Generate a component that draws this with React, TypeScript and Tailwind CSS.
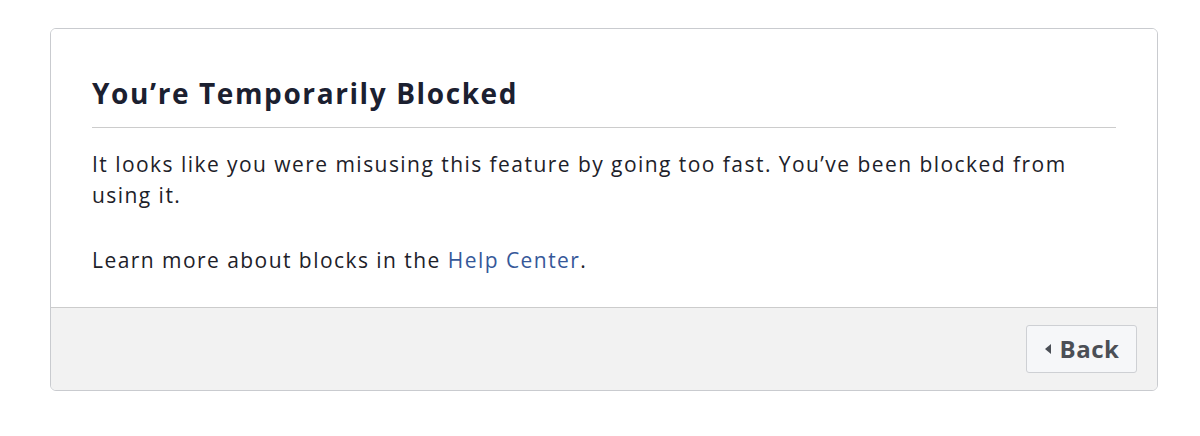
const BackArrow = () => (
  <svg width="8" height="12" viewBox="0 0 8 12" className="mr-[8px]">
    <path d="M7 1 L1 6 L7 11 Z" fill="#4b4f56" />
  </svg>
);

const App = () => {
  return (
    <div className="w-[1200px] h-[436px] bg-white pt-[28px] pl-[50px] font-['Open_Sans','Liberation_Sans',sans-serif]">
      <div className="w-[1108px] h-[363px] border border-[#c9cbcf] rounded-[6px] overflow-hidden flex flex-col">
        <div className="flex-1 bg-white px-[41px] pt-[44px]">
          <h1 className="text-[28px] leading-[40px] font-bold tracking-[1.6px] text-[#1b2030] pb-[14px] border-b border-[#cccccc]">
            You’re Temporarily Blocked
          </h1>
          <div className="pt-[21px] text-[21px] leading-[31px] tracking-[1.45px] text-[#1d2129]">
            <p>
              It looks like you were misusing this feature by going too fast. You’ve been blocked from
              <br />
              using it.
            </p>
            <p className="mt-[34px]">
              Learn more about blocks in the <a className="text-[#365899]">Help Center</a>.
            </p>
          </div>
        </div>
        <div className="h-[83px] bg-[#f2f2f2] border-t border-[#cccccc] flex items-center justify-end pr-[20px]">
          <button className="h-[48px] w-[111px] flex items-center justify-center bg-[#f6f7f9] border border-[#ced0d4] rounded-[3px] text-[24px] font-bold tracking-[0.5px] text-[#4b4f56]">
            <BackArrow />
            Back
          </button>
        </div>
      </div>
    </div>
  );
};

export default App;
